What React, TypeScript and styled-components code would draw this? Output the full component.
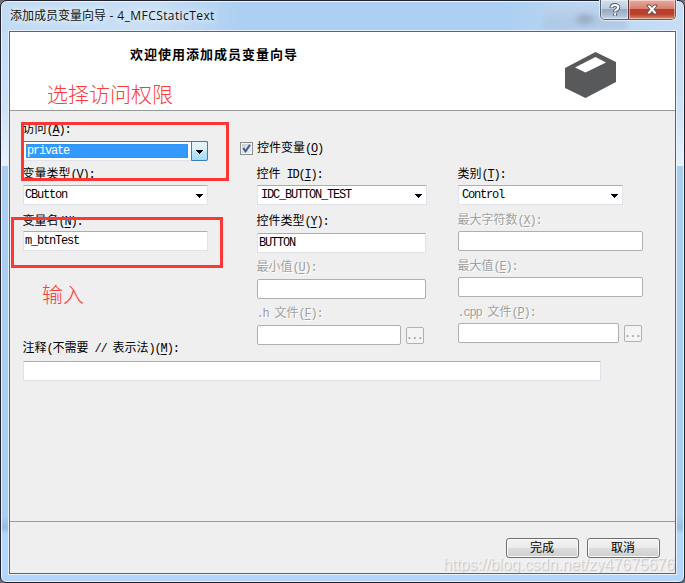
import React from 'react';
import styled, { createGlobalStyle, css } from 'styled-components';

const GlobalStyle = createGlobalStyle`
  html, body { margin: 0; padding: 0; overflow: hidden; background: #6b7078; }
  *, *::before, *::after { box-sizing: border-box; }
`;

const songFont = css`
  font-family: 'Liberation Mono', 'Noto Sans CJK SC', monospace;
  font-size: 12px;
`;

const Frame = styled.div`
  position: relative;
  display: flex;
  flex-direction: column;
  width: 685px;
  height: 583px;
  padding: 0 7px 7px;
  border: 1px solid #20222f;
  border-radius: 7px 7px 6px 6px;
  box-shadow: inset 0 0 0 1px #e9f4ff;
  background:
    linear-gradient(#b5d6fb, #b5d6fb) 0 533px / 100% 50px no-repeat,
    linear-gradient(#abcdf0 0, #abcdf0 350px, #9bbce2 362px, #b5d6fb 368px) 0 165px / 100% 368px no-repeat,
    linear-gradient(#c5dcf4 0, #cfe2f6 80px, #e8f2fc 135px) 0 30px / 100% 135px no-repeat,
    linear-gradient(90deg, #c1daf3 0, #c9dff5 150px, #adcff2 240px, #adcff2 500px, #bdd8f5 600px, #c8def6 100%);
`;

const TitleBar = styled.header`
  position: relative;
  display: flex;
  justify-content: space-between;
  height: 29px;
  flex: none;
`;

const Title = styled.h1`
  margin: 0;
  padding-left: 2px;
  font: 400 12px/29px 'Open Sans', 'Noto Sans CJK SC', sans-serif;
  color: #101010;
  white-space: pre;
  text-shadow: 0 0 6px #fff, 0 0 10px #e8f3ff;
`;

const Latin = styled.span`
  letter-spacing: 0.42px;
`;

const GlassShadow = styled.div`
  position: absolute;
  left: 535px;
  top: 5px;
  width: 84px;
  height: 23px;
  background:
    radial-gradient(ellipse 13px 7px at 42px 13px, #8c9db1 30%, transparent 100%),
    linear-gradient(#bdd3ea, #a9c2dd);
  filter: blur(2.5px);
  opacity: 0.75;
`;

const CaptionButtons = styled.div`
  position: relative;
  display: flex;
  width: 76px;
  height: 20px;
  margin-top: -1px;
  margin-right: 1px;
  border: 1px solid #53627a;
  border-top: 0;
  border-radius: 0 0 5px 5px;
  box-shadow: 0 0 0 1px #dbeaf9;
  overflow: hidden;
`;

const CaptionButton = styled.button<{ $close?: boolean }>`
  display: flex;
  align-items: center;
  justify-content: center;
  flex: ${p => (p.$close ? '1' : '0 0 27px')};
  padding: 0;
  border: 0;
  border-left: ${p => (p.$close ? '1px solid #5a2c32' : '0')};
  box-shadow: inset 0 0 0 1px rgba(255, 255, 255, 0.45);
  background: ${p =>
    p.$close
      ? 'linear-gradient(#e8aa9e 0, #d6806f 46%, #c03c27 50%, #b8412c 75%, #dc8b68 100%)'
      : 'linear-gradient(#d5e0ec 0, #bccbdc 46%, #97abc2 50%, #a6b9cf 75%, #c7d8ea 100%)'};
`;

const Client = styled.main`
  position: relative;
  display: flex;
  flex-direction: column;
  width: 667px;
  height: 543px;
  margin-left: 1px;
  margin-top: 1px;
  border: 1px solid #56657a;
  background: #efefef;
  box-shadow: 0 0 0 1px #e5f1fd;
`;

const Banner = styled.section`
  display: flex;
  justify-content: space-between;
  height: 79px;
  flex: none;
  padding: 20px 59px 0 120px;
  border-bottom: 1px solid #999;
  background: #fff;
`;

const BannerTitle = styled.h2`
  margin: 0;
  height: 16px;
  font: 700 13px/3px 'Noto Sans CJK SC', sans-serif;
  letter-spacing: 1px;
  color: #000;
`;

const Form = styled.section`
  position: relative;
  height: 411px;
  flex: none;
  border-bottom: 1px solid #999;
  padding: 10px 0 0 13px;
`;

const Columns = styled.div`
  display: grid;
  grid-template-columns: 217px 218px 186px;
  height: 219px;
`;

const Column = styled.div<{ $inset?: number; $top?: number }>`
  padding-left: ${p => p.$inset ?? 0}px;
  padding-top: ${p => p.$top ?? 0}px;
`;

const Field = styled.div<{ $before?: number; $gap?: number }>`
  display: flex;
  flex-direction: column;
  gap: ${p => p.$gap ?? 3}px;
  padding-top: ${p => p.$before ?? 0}px;
`;

const Caption = styled.label<{ $disabled?: boolean }>`
  ${songFont}
  display: flex;
  height: 16px;
  line-height: 18px;
  margin-left: -0.5px;
  white-space: pre;
  color: ${p => (p.$disabled ? '#a0a0a0' : '#000')};
  text-shadow: ${p => (p.$disabled ? '1px 1px 0 #fff' : 'none')};
`;

const Half = styled.span`
  letter-spacing: -1.2px;
`;

const Key = styled.span`
  text-decoration: underline;
  text-underline-offset: 2px;
`;

const boxBase = css<{ $w: number; $disabled?: boolean }>`
  ${songFont}
  letter-spacing: -1.2px;
  width: ${p => p.$w}px;
  height: 20px;
  line-height: 16px;
  border: 1px solid ${p => (p.$disabled ? '#afafaf' : '#e2e3ea')};
  border-top-color: ${p => (p.$disabled ? '#afafaf' : '#abadb3')};
  border-radius: ${p => (p.$disabled ? 2 : 1)}px;
  background: #fff;
  color: #000;
`;

const TextBox = styled.div<{ $w: number; $disabled?: boolean }>`
  ${boxBase}
  padding: 1px 0 0 1px;
`;

const Combo = styled.div<{ $w: number; $active?: boolean; $pad?: number }>`
  ${boxBase}
  display: flex;
  justify-content: space-between;
  padding-left: ${p => (p.$active ? 2 : p.$pad ?? 1)}px;
  ${p => p.$active && css`border-color: #3c7fb1 #b5cfe7 #e2e3ea #b5cfe7;`}
`;

const Value = styled.span`
  padding-top: 1px;
`;

const SelectedValue = styled.span`
  flex: 1;
  height: 14px;
  margin: 2px 3px 0 0;
  line-height: 14px;
  outline: 1px dotted #c96a1e;
  outline-offset: -1px;
  background: #3399ff;
  color: #fff;
  padding-left: 1px;
`;

const Arrow = styled.span<{ $active?: boolean }>`
  display: flex;
  align-items: center;
  justify-content: center;
  width: 16px;
  height: 20px;
  margin: -1px 0 0 0;
  padding-top: 1px;
  ${p =>
    p.$active &&
    css`
      width: 17px;
      margin-right: -1px;
      border: 1px solid #3c7fb1;
      border-radius: 0 2px 2px 0;
      background: linear-gradient(#eaf6fd 0, #d9f0fc 50%, #bee6fd 51%, #a7d9f5 100%);
    `}
`;

const CheckRow = styled.div`
  ${songFont}
  display: flex;
  align-items: center;
  gap: 4px;
  height: 16px;
  line-height: 16px;
`;

const CheckText = styled.span`
  padding-top: 2px;
`;

const CheckBox = styled.span`
  display: flex;
  width: 13px;
  height: 13px;
  border: 1px solid #8e8f8f;
  box-shadow: inset 0 0 0 1px #f4f4f4;
  background: linear-gradient(135deg, #c4cad2, #f3f4f6);
`;

const FileRow = styled.div`
  display: flex;
  gap: 5px;
  align-items: flex-start;
`;

const Browse = styled.button`
  width: 18px;
  height: 17px;
  margin-top: 2px;
  padding: 2px 0 0;
  border: 1px solid #adb2b5;
  border-radius: 2px;
  background: #f4f4f4;
  color: #999;
  font: 12px/13px 'Liberation Mono', monospace;
  letter-spacing: -1.7px;
  text-indent: -2px;
`;

const Footer = styled.footer`
  display: flex;
  justify-content: flex-end;
  gap: 8px;
  padding: 16px 15px 0 0;
`;

const PushButton = styled.button`
  width: 73px;
  height: 20px;
  padding: 0 1px 3px 0;
  border: 1px solid #707070;
  border-radius: 3px;
  box-shadow: inset 0 0 0 1px #fbfbfb;
  background: linear-gradient(#f2f2f2 0, #ebebeb 49%, #dddddd 50%, #cfcfcf 100%);
  color: #000;
  font: 12px/14px 'Noto Sans CJK SC', sans-serif;
`;

const RedBox = styled.div<{ $x: number; $y: number; $w: number; $h: number }>`
  position: absolute;
  left: ${p => p.$x}px;
  top: ${p => p.$y}px;
  width: ${p => p.$w}px;
  height: ${p => p.$h}px;
  border: 3px solid #ff3636;
`;

const RedNote = styled.div<{ $x: number; $y: number }>`
  position: absolute;
  left: ${p => p.$x}px;
  top: ${p => p.$y}px;
  font: 300 21px/24px 'Noto Sans CJK SC', sans-serif;
  color: #ff3b3b;
  white-space: nowrap;
`;

const Watermark = styled.div`
  position: absolute;
  left: 442px;
  top: 554px;
  font: 16px/20px 'Liberation Sans', sans-serif;
  letter-spacing: -0.1px;
  color: rgba(255, 255, 255, 0.6);
  text-shadow: 1px 1px 1px rgba(120, 120, 120, 0.38);
  white-space: nowrap;
`;

function Mnemonic({ letter, colon = true }: { letter: string; colon?: boolean }) {
  return (
    <Half>
      (<Key>{letter}</Key>){colon ? ':' : ''}
    </Half>
  );
}

function DropArrow({ active }: { active?: boolean }) {
  return (
    <Arrow $active={active}>
      <svg width="7" height="4" viewBox="0 0 7 4" shapeRendering="crispEdges">
        <path d="M0 0H7V1H6V2H5V3H4V4H3V3H2V2H1V1H0Z" fill="#000" />
      </svg>
    </Arrow>
  );
}

function BoxIcon() {
  return (
    <svg width="51" height="46" viewBox="0 0 51 46">
      <path d="M0 16 30.5 0 51 10V30L20.5 46 0 36Z" fill="#58595b" />
      <path d="M10 15.5 30.5 5 41 10.5 20.5 20.5Z" fill="#fff" />
    </svg>
  );
}

export default function App() {
  return (
    <>
      <GlobalStyle />
      <Frame>
        <TitleBar>
          <Title>添加成员变量向导<Latin> - 4_MFCStaticText</Latin></Title>
          <GlassShadow />
          <CaptionButtons>
            <CaptionButton aria-label="Help">
              <svg width="12" height="14" viewBox="0 0 12 14" fill="none">
                <path d="M2.5 5C2.5 1.2 9.3 1.2 9.3 4.6C9.3 6.6 6 6.6 6 9M6 10.2V12.8" stroke="#4b5a70" strokeWidth="4" />
                <path d="M2.5 4.4C2.5 1.2 9.3 1.2 9.3 4.6C9.3 6.6 6 6.6 6 8.6M6 10.3V12.4" stroke="#fff" strokeWidth="2.2" />
              </svg>
            </CaptionButton>
            <CaptionButton $close aria-label="Close">
              <svg width="12" height="11" viewBox="0 0 12 11">
                <path d="M1 1H4L6 3.4 8 1H11V2L8 5.2 11 9V10H8L6 7.4 4 10H1V9L4 5.2 1 2Z" fill="#fff" stroke="#674a57" />
              </svg>
            </CaptionButton>
          </CaptionButtons>
        </TitleBar>
        <Client>
          <Banner>
            <BannerTitle>欢迎使用添加成员变量向导</BannerTitle>
            <BoxIcon />
          </Banner>
          <Form>
            <Columns>
              <Column>
                <Field $gap={4}>
                  <Caption>访问<Mnemonic letter="A" /></Caption>
                  <Combo $w={185} $active>
                    <SelectedValue>private</SelectedValue>
                    <DropArrow active />
                  </Combo>
                </Field>
                <Field $before={5}>
                  <Caption>变量类型<Mnemonic letter="V" /></Caption>
                  <Combo $w={185}><Value>CButton</Value><DropArrow /></Combo>
                </Field>
                <Field $before={8} $gap={2}>
                  <Caption>变量名<Mnemonic letter="N" /></Caption>
                  <TextBox $w={185}>m_btnTest</TextBox>
                </Field>
              </Column>
              <Column $top={19}>
                <CheckRow>
                  <CheckBox>
                    <svg width="11" height="11" viewBox="0 0 11 11" fill="none">
                      <path d="M2.3 5.2 4.6 8.2 9 1.8" stroke="#3c5a9c" strokeWidth="2" />
                    </svg>
                  </CheckBox>
                  <CheckText>控件变量<Mnemonic letter="O" colon={false} /></CheckText>
                </CheckRow>
                <Column $inset={17} $top={10}>
                  <Field>
                    <Caption>控件<Half> ID</Half><Mnemonic letter="I" /></Caption>
                    <Combo $w={170} $pad={3}><Value>IDC_BUTTON_TEST</Value><DropArrow /></Combo>
                  </Field>
                  <Field $before={8} $gap={4}>
                    <Caption>控件类型<Mnemonic letter="Y" /></Caption>
                    <TextBox $w={169}>BUTTON</TextBox>
                  </Field>
                  <Field $before={6} $gap={4}>
                    <Caption $disabled>最小值<Mnemonic letter="U" /></Caption>
                    <TextBox $w={169} $disabled />
                  </Field>
                  <Field $before={6} $gap={4}>
                    <Caption $disabled><Half>.h </Half>文件<Mnemonic letter="F" /></Caption>
                    <FileRow><TextBox $w={144} $disabled /><Browse>...</Browse></FileRow>
                  </Field>
                </Column>
              </Column>
              <Column $top={45}>
                <Field>
                  <Caption>类别<Mnemonic letter="T" /></Caption>
                  <Combo $w={165} $pad={3}><Value>Control</Value><DropArrow /></Combo>
                </Field>
                <Field $before={7}>
                  <Caption $disabled>最大字符数<Mnemonic letter="X" /></Caption>
                  <TextBox $w={185} $disabled />
                </Field>
                <Field $before={7}>
                  <Caption $disabled>最大值<Mnemonic letter="E" /></Caption>
                  <TextBox $w={185} $disabled />
                </Field>
                <Field $before={7}>
                  <Caption $disabled><Half>.cpp </Half>文件<Mnemonic letter="P" /></Caption>
                  <FileRow><TextBox $w={161} $disabled /><Browse>...</Browse></FileRow>
                </Field>
              </Column>
            </Columns>
            <Field $gap={5}>
              <Caption>注释<Half>(</Half>不需要<Half> // </Half>表示法<Half>)</Half><Mnemonic letter="M" /></Caption>
              <TextBox $w={578} />
            </Field>
          </Form>
          <Footer>
            <PushButton>完成</PushButton>
            <PushButton>取消</PushButton>
          </Footer>
        </Client>
        <RedBox $x={20} $y={121} $w={208} $h={59} />
        <RedBox $x={10} $y={216} $w={212} $h={51} />
        <RedNote $x={46} $y={80}>选择访问权限</RedNote>
        <RedNote $x={41} $y={280}>输入</RedNote>
        <Watermark>https://blog.csdn.net/zy47675676</Watermark>
      </Frame>
    </>
  );
}
